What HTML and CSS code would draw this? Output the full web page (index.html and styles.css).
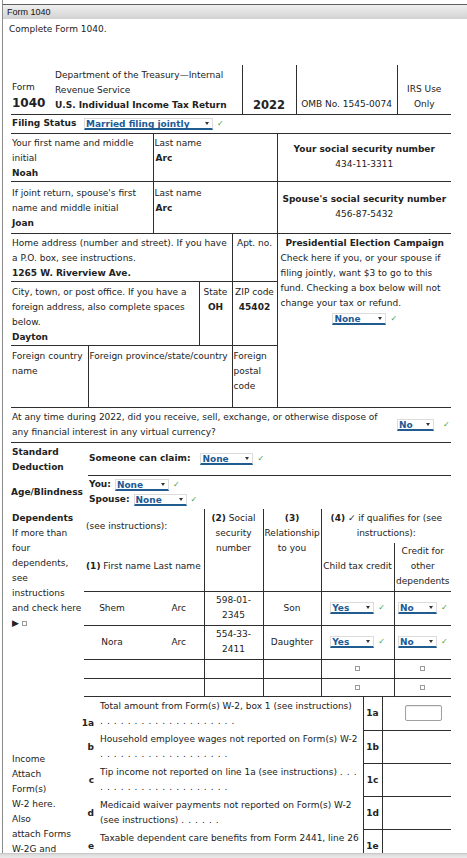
FILE: index.html
```html
<!DOCTYPE html>
<html>
<head>
<meta charset="utf-8">
<title>Form 1040</title>
<link rel="stylesheet" href="styles.css">
</head>
<body>
<div class="frame">
  <div class="head">Form 1040</div>
  <div class="content">
    <p class="intro">Complete Form 1040.</p>

    <table class="tbl t-title">
      <colgroup><col class="w41"><col class="w190"><col class="w54"><col class="w101"><col class="w54"></colgroup>
      <tr>
        <td class="c-form"><div>Form</div><div class="num">1040</div></td>
        <td class="c-dept">Department of the Treasury—Internal<br>Revenue Service<br><b>U.S. Individual Income Tax Return</b></td>
        <td class="ln-l c-year">2022</td>
        <td class="ln-l c-omb">OMB No. 1545-0074</td>
        <td class="ln-l c-irs">IRS Use<br>Only</td>
      </tr>
    </table>

    <div class="filing">
      <b class="filing-lbl">Filing Status</b>
      <span class="sel w129">Married filing jointly<i class="arr"></i></span><span class="ok">✓</span>
    </div>

    <table class="tbl t-name">
      <colgroup><col class="w142"><col class="w124"><col class="w174"></colgroup>
      <tr class="r47">
        <td class="ln-b p2">Your first name and middle<br>initial<br><b>Noah</b></td>
        <td class="ln-b ln-l p2">Last name<br><b class="val">Arc</b></td>
        <td class="ln-b ln-l mid ctr"><b>Your social security number</b><br>434-11-3311</td>
      </tr>
      <tr class="r52">
        <td class="ln-b p4">If joint return, spouse's first<br>name and middle initial<br><b>Joan</b></td>
        <td class="ln-b ln-l p4">Last name<br><b class="val">Arc</b></td>
        <td class="ln-b ln-l mid ctr"><b>Spouse's social security number</b><br>456-87-5432</td>
      </tr>
    </table>

    <table class="tbl t-addr">
      <colgroup><col class="w77"><col class="w111"><col class="w33"><col class="w45"><col class="w174"></colgroup>
      <tr class="r48">
        <td colspan="3" class="ln-b p2">Home address (number and street). If you have<br>a P.O. box, see instructions.<br><b>1265 W. Riverview Ave.</b></td>
        <td class="ln-b ln-l p2 ctr">Apt. no.</td>
        <td rowspan="3" class="ln-l ln-b pres">
          <div class="ctr"><b>Presidential Election Campaign</b></div>
          <div>Check here if you, or your spouse if<br>filing jointly, want $3 to go to this<br>fund. Checking a box below will not<br>change your tax or refund.</div>
          <div class="pres-sel"><span class="sel w54">None<i class="arr"></i></span><span class="ok">✓</span></div>
        </td>
      </tr>
      <tr class="r64">
        <td colspan="2" class="ln-b p3">City, town, or post office. If you have a<br>foreign address, also complete spaces<br>below.<br><b>Dayton</b></td>
        <td class="ln-b ln-l p3 ctr">State<br><b>OH</b></td>
        <td class="ln-b ln-l p3 ctr">ZIP code<br><b>45402</b></td>
      </tr>
      <tr class="r62">
        <td class="ln-b p3">Foreign country<br>name</td>
        <td colspan="2" class="ln-b ln-l p3">Foreign province/state/country</td>
        <td class="ln-b ln-l p3">Foreign<br>postal<br>code</td>
      </tr>
    </table>

    <div class="currency">
      <div class="cur-q">At any time during 2022, did you receive, sell, exchange, or otherwise dispose of<br>any financial interest in any virtual currency?</div>
      <span class="sel w37">No<i class="arr"></i></span><span class="ok ok-wide">✓</span>
    </div>

    <table class="tbl t-ded">
      <colgroup><col class="w77"><col class="w363"></colgroup>
      <tr class="r32">
        <td class="p2 bold">Standard<br>Deduction</td>
        <td class="ln-b mid pl1"><b>Someone can claim:</b><span class="sel w53 gap10">None<i class="arr"></i></span><span class="ok">✓</span></td>
      </tr>
      <tr class="r34">
        <td class="mid bold">Age/Blindness</td>
        <td class="mid pl1">
          <div class="agel"><b>You:</b><span class="sel w54 gap4">None<i class="arr"></i></span><span class="ok">✓</span></div>
          <div class="agel"><b>Spouse:</b><span class="sel w53 gap4">None<i class="arr"></i></span><span class="ok">✓</span></div>
        </td>
      </tr>
    </table>

    <table class="tbl t-dep">
      <colgroup><col class="w73"><col class="w56"><col class="w64"><col class="w59"><col class="w58"><col class="w73"><col class="w57"></colgroup>
      <tr class="r34">
        <td rowspan="6" class="p2 nowrap"><b>Dependents</b><br>If more than<br>four<br>dependents,<br>see<br>instructions<br>and check here<br><span class="tri">▶</span> <span class="cb"></span></td>
        <td colspan="2" class="mid pl2">(see instructions):</td>
        <td rowspan="2" class="ln-l ln-b ctr p2"><b>(2)</b> Social<br>security<br>number</td>
        <td rowspan="2" class="ln-l ln-b ctr p2"><b>(3)</b><br>Relationship<br>to you</td>
        <td colspan="2" class="ln-l ctr p2"><b>(4)</b> ✓ if qualifies for (see<br>instructions):</td>
      </tr>
      <tr class="r48">
        <td colspan="2" class="ln-b mid pl2 nowrap"><b>(1)</b> First name Last name</td>
        <td class="ln-l ln-b mid ctr">Child tax credit</td>
        <td class="ln-l ln-b ctr p1">Credit for<br>other<br>dependents</td>
      </tr>
      <tr class="r34">
        <td class="ln-b mid ctr">Shem</td>
        <td class="ln-b mid ctr pl14">Arc</td>
        <td class="ln-l ln-b mid ctr">598-01-<br>2345</td>
        <td class="ln-l ln-b mid ctr">Son</td>
        <td class="ln-l ln-b mid ctr"><span class="sel w44">Yes<i class="arr"></i></span><span class="ok">✓</span></td>
        <td class="ln-l ln-b mid ctr"><span class="sel w39">No<i class="arr"></i></span><span class="ok">✓</span></td>
      </tr>
      <tr class="r34">
        <td class="ln-b mid ctr">Nora</td>
        <td class="ln-b mid ctr pl14">Arc</td>
        <td class="ln-l ln-b mid ctr">554-33-<br>2411</td>
        <td class="ln-l ln-b mid ctr">Daughter</td>
        <td class="ln-l ln-b mid ctr"><span class="sel w44">Yes<i class="arr"></i></span><span class="ok">✓</span></td>
        <td class="ln-l ln-b mid ctr"><span class="sel w39">No<i class="arr"></i></span><span class="ok">✓</span></td>
      </tr>
      <tr class="r19">
        <td class="ln-b"></td>
        <td class="ln-b"></td>
        <td class="ln-l ln-b"></td>
        <td class="ln-l ln-b"></td>
        <td class="ln-l ln-b mid ctr"><span class="cb"></span></td>
        <td class="ln-l ln-b mid ctr"><span class="cb"></span></td>
      </tr>
      <tr class="r18">
        <td class="ln-b"></td>
        <td class="ln-b"></td>
        <td class="ln-l ln-b"></td>
        <td class="ln-l ln-b"></td>
        <td class="ln-l ln-b mid ctr"><span class="cb"></span></td>
        <td class="ln-l ln-b mid ctr"><span class="cb"></span></td>
      </tr>
    </table>

    <table class="tbl t-inc">
      <colgroup><col class="w67"><col class="w18"><col class="w267"><col class="w19"><col class="w69"></colgroup>
      <tr class="r34">
        <td rowspan="7" class="inc-lbl nowrap">Income<br>Attach<br>Form(s)<br>W-2 here.<br>Also<br>attach Forms<br>W-2G and<br>1099-R if tax<br>was withheld.</td>
        <td class="letter bot">1a</td>
        <td class="desc">Total amount from Form(s) W-2, box 1 (see instructions)<br><span class="dots">. . . . . . . . . . . . . . . . . . . .</span></td>
        <td class="ln-l ln-b lbox">1a</td>
        <td class="ln-l ln-b amt"><span class="inp"></span></td>
      </tr>
      <tr class="r33">
        <td class="letter">b</td>
        <td class="desc">Household employee wages not reported on Form(s) W-2<br><span class="dots">. . . . . . . . . . . . . . . . . . .</span></td>
        <td class="ln-l ln-b lbox">1b</td>
        <td class="ln-l ln-b"></td>
      </tr>
      <tr class="r33">
        <td class="letter">c</td>
        <td class="desc">Tip income not reported on line 1a (see instructions) <span class="dots">. . .</span><br><span class="dots">. . . . . . . . . . . . . . . . . . .</span></td>
        <td class="ln-l ln-b lbox">1c</td>
        <td class="ln-l ln-b"></td>
      </tr>
      <tr class="r33">
        <td class="letter">d</td>
        <td class="desc">Medicaid waiver payments not reported on Form(s) W-2<br>(see instructions) <span class="dots">. . . . . .</span></td>
        <td class="ln-l ln-b lbox">1d</td>
        <td class="ln-l ln-b"></td>
      </tr>
      <tr class="r33">
        <td class="letter">e</td>
        <td class="desc">Taxable dependent care benefits from Form 2441, line 26<br><span class="dots">. . . . . . . . . . . . . . . . . . .</span></td>
        <td class="ln-l ln-b lbox">1e</td>
        <td class="ln-l ln-b"></td>
      </tr>
      <tr class="r33">
        <td class="letter">f</td>
        <td class="desc">Employer-provided adoption benefits from Form 8839,<br>line 29 <span class="dots">. . . . . . . . . . . . . . .</span></td>
        <td class="ln-l ln-b lbox">1f</td>
        <td class="ln-l ln-b"></td>
      </tr>
      <tr class="r33">
        <td class="letter">g</td>
        <td class="desc">Wages from Form 8919, line 6 <span class="dots">. . . . . . . . . .</span></td>
        <td class="ln-l ln-b lbox">1g</td>
        <td class="ln-l ln-b"></td>
      </tr>
    </table>
  </div>
</div>
<div class="bottom-bar"></div>
</body>
</html>
```

FILE: styles.css
```css
* { box-sizing: border-box; }

body {
  margin: 0;
  font-family: "DejaVu Sans", Verdana, sans-serif;
  font-size: 9px;
  line-height: 15px;
  color: #222;
  background: #fff;
}

.frame {
  margin-left: 2px;
  border-left: 1px solid #8c8c8c;
  padding-top: 4px;
  min-height: 900px;
}

.head {
  font-family: "Liberation Sans", Arial, sans-serif;
  font-size: 9px;
  line-height: 14px;
  height: 15px;
  border-top: 1px solid #5f5f5f;
  background: linear-gradient(#efefef, #d2d2d2);
  padding-left: 4px;
  color: #111;
}

.content { padding: 0 0 0 6px; }

.intro { margin: 3px 0 0; }

.tbl {
  border-collapse: collapse;
  table-layout: fixed;
  width: 440px;
  margin-left: 2px;
}
.tbl td { padding: 0; vertical-align: top; }

.ln-b { border-bottom: 1px solid #2e2e2e; }
.ln-l { border-left: 1px solid #2e2e2e; }
.mid { vertical-align: middle !important; }
.bot { vertical-align: bottom !important; }
.ctr { text-align: center; }
.bold { font-weight: bold; }
.nowrap { white-space: nowrap; }
.p1 { padding: 1px 1px 0 !important; }
.p2 { padding: 2px 1px 0 !important; }
.p3 { padding: 3px 1px 0 !important; }
.p4 { padding: 4px 1px 0 !important; }
.pl1 { padding-left: 1px !important; }
.pl2 { padding-left: 2px !important; }
.pl14 { padding-left: 14px !important; }
.val { padding-left: 1px; }

col.w18 { width: 18px; }
col.w19 { width: 19px; }
col.w33 { width: 33px; }
col.w41 { width: 41px; }
col.w45 { width: 45px; }
col.w54 { width: 54px; }
col.w56 { width: 56px; }
col.w57 { width: 57px; }
col.w58 { width: 58px; }
col.w59 { width: 59px; }
col.w64 { width: 64px; }
col.w67 { width: 67px; }
col.w69 { width: 69px; }
col.w73 { width: 73px; }
col.w77 { width: 77px; }
col.w101 { width: 101px; }
col.w111 { width: 111px; }
col.w124 { width: 124px; }
col.w142 { width: 142px; }
col.w174 { width: 174px; }
col.w190 { width: 190px; }
col.w267 { width: 267px; }
col.w363 { width: 363px; }

.r18 td { height: 18px; }
.r19 td { height: 19px; }
.r32 td { height: 32px; }
.r33 td { height: 33px; }
.r34 td { height: 34px; }
.r47 td { height: 47px; }
.r48 td { height: 48px; }
.r52 td { height: 52px; }
.r62 td { height: 62px; }
.r64 td { height: 64px; }

/* title row */
.t-title { margin-top: 28px; }
.t-title td {
  height: 49px;
  vertical-align: bottom;
  border-bottom: 1px solid #2e2e2e;
  padding-bottom: 1px;
}
.c-form { padding-left: 1px !important; padding-bottom: 2px !important; }
.c-form .num { font-size: 12px; font-weight: bold; line-height: 17px; }
.c-dept { padding-left: 3px !important; white-space: nowrap; }
.c-year { text-align: center; font-size: 11.5px; font-weight: bold; }
.c-omb { text-align: center; padding-bottom: 2px !important; }
.c-irs { text-align: center; padding-bottom: 2px !important; }

/* filing status */
.filing {
  width: 440px;
  margin-left: 2px;
  height: 19px;
  border-bottom: 1px solid #2e2e2e;
  display: flex;
  align-items: center;
  padding-left: 1px;
}
.filing-lbl { width: 72px; }

/* selects */
.sel {
  position: relative;
  display: inline-block;
  height: 12px;
  line-height: 11px;
  border: 1px solid #dcdcdc;
  border-bottom: 2px solid #215c91;
  color: #1d5a95;
  font-weight: bold;
  text-align: left;
  padding-left: 1px;
  vertical-align: middle;
  background: #fff;
}
.arr {
  position: absolute;
  right: 3px;
  top: 3px;
  width: 0;
  height: 0;
  border-left: 2.5px solid transparent;
  border-right: 2.5px solid transparent;
  border-top: 3px solid #333;
}
.w37 { width: 37px; }
.w39 { width: 39px; }
.w44 { width: 44px; }
.w53 { width: 53px; }
.w54 { width: 54px; }
.w129 { width: 129px; }
.gap4 { margin-left: 4px; }
.gap10 { margin-left: 10px; }

.ok {
  display: inline-block;
  color: #3d9e3d;
  font-size: 8px;
  margin-left: 4px;
  vertical-align: middle;
  line-height: 10px;
}
.ok-wide { margin-left: 9px; }

/* address block */
.t-addr td { white-space: nowrap; }
.pres { padding: 2px 2px 0 3px !important; }
.pres-sel { height: 16px; display: flex; align-items: center; justify-content: center; }

/* virtual currency */
.currency {
  width: 440px;
  margin-left: 2px;
  height: 35px;
  border-bottom: 1px solid #2e2e2e;
  display: flex;
  align-items: center;
}
.cur-q { width: 386px; padding-left: 1px; white-space: nowrap; }

/* deduction */
.agel { display: flex; align-items: center; height: 15px; }

/* dependents */
.tri { font-size: 9px; }
.cb {
  display: inline-block;
  width: 5px;
  height: 5px;
  border: 1px solid #9a9a9a;
  vertical-align: middle;
}

/* income */
.inc-lbl { padding: 55px 0 0 1px !important; overflow: hidden; }
.letter {
  text-align: right;
  font-weight: bold;
  padding-right: 2px !important;
  vertical-align: middle !important;
}
.letter.bot { vertical-align: bottom !important; padding-bottom: 0 !important; }
.desc { padding-left: 4px !important; vertical-align: middle !important; white-space: nowrap; }
.dots { letter-spacing: 0.6px; }
.lbox { text-align: center; font-weight: bold; vertical-align: middle !important; }
.amt { vertical-align: middle !important; text-align: right; padding-right: 9px !important; }
.inp {
  display: inline-block;
  width: 37px;
  height: 16px;
  border: 1px solid #a0a0a0;
  border-radius: 2px;
  vertical-align: middle;
  box-shadow: inset 0 1px 1px rgba(0,0,0,0.08);
}

.bottom-bar {
  position: fixed;
  left: 0;
  right: 0;
  bottom: 0;
  height: 5px;
  border-top: 1px solid #c9c9c9;
  background: linear-gradient(#d9d9d9, #ececec);
}
```
